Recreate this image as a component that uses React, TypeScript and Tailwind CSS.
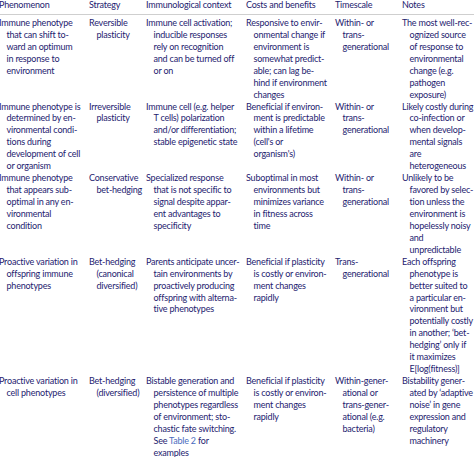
import React from 'react';

type Cell = string[];

interface Row {
  cells: Cell[];
}

const headers = [
  'Phenomenon',
  'Strategy',
  'Immunological context',
  'Costs and benefits',
  'Timescale',
  'Notes',
];

const rows: Row[] = [
  {
    cells: [
      ['Immune phenotype', 'that can shift to-', 'ward an optimum', 'in response to', 'environment'],
      ['Reversible', 'plasticity'],
      ['Immune cell activation;', 'inducible responses', 'rely on recognition', 'and can be turned off', 'or on'],
      [
        'Responsive to envir-',
        'onmental change if',
        'environment is',
        'somewhat predict-',
        'able; can lag be-',
        'hind if environment',
        'changes',
      ],
      ['Within- or', 'trans-', 'generational'],
      ['The most well-rec-', 'ognized source', 'of response to', 'environmental', 'change (e.g.', 'pathogen', 'exposure)'],
    ],
  },
  {
    cells: [
      ['Immune phenotype is', 'determined by en-', 'vironmental condi-', 'tions during', 'development of cell', 'or organism'],
      ['Irreversible', 'plasticity'],
      ['Immune cell (e.g. helper', 'T cells) polarization', 'and/or differentiation;', 'stable epigenetic state'],
      ['Beneficial if environ-', 'ment is predictable', 'within a lifetime', "(cell's or", "organism's)"],
      ['Within- or', 'trans-', 'generational'],
      ['Likely costly during', 'co-infection or', 'when develop-', 'mental signals', 'are', 'heterogeneous'],
    ],
  },
  {
    cells: [
      ['Immune phenotype', 'that appears sub-', 'optimal in any en-', 'vironmental', 'condition'],
      ['Conservative', 'bet-hedging'],
      ['Specialized response', 'that is not specific to', 'signal despite appar-', 'ent advantages to', 'specificity'],
      ['Suboptimal in most', 'environments but', 'minimizes variance', 'in fitness across', 'time'],
      ['Within- or', 'trans-', 'generational'],
      ['Unlikely to be', 'favored by selec-', 'tion unless the', 'environment is', 'hopelessly noisy', 'and', 'unpredictable'],
    ],
  },
  {
    cells: [
      ['Proactive variation in', 'offspring immune', 'phenotypes'],
      ['Bet-hedging', '(canonical', 'diversified)'],
      [
        'Parents anticipate uncer-',
        'tain environments by',
        'proactively producing',
        'offspring with alterna-',
        'tive phenotypes',
      ],
      ['Beneficial if plasticity', 'is costly or environ-', 'ment changes', 'rapidly'],
      ['Trans-', 'generational'],
      [
        'Each offspring',
        'phenotype is',
        'better suited to',
        'a particular en-',
        'vironment but',
        'potentially costly',
        'in another; \u2018bet-',
        'hedging\u2019 only if',
        'it maximizes',
        'E[log(fitness)]',
      ],
    ],
  },
  {
    cells: [
      ['Proactive variation in', 'cell phenotypes'],
      ['Bet-hedging', '(diversified)'],
      [
        'Bistable generation and',
        'persistence of multiple',
        'phenotypes regardless',
        'of environment; sto-',
        'chastic fate switching.',
        '@@TABLE2',
        'examples',
      ],
      ['Beneficial if plasticity', 'is costly or environ-', 'ment changes', 'rapidly'],
      ['Within-gener-', 'ational or', 'trans-gener-', 'ational (e.g.', 'bacteria)'],
      ['Bistability gener-', 'ated by \u2018adaptive', 'noise\u2019 in gene', 'expression and', 'regulatory', 'machinery'],
    ],
  },
];

const grid = 'grid grid-cols-[89px_57px_100px_89px_67px_1fr]';

function Line({ text, first }: { text: string; first: boolean }) {
  const indent = first ? '' : 'pl-[7.5px]';
  if (text === '@@TABLE2') {
    return (
      <div className={`whitespace-nowrap ${indent}`}>
        See <span className="text-[#4a6cc0]">Table 2</span> for
      </div>
    );
  }
  return <div className={`whitespace-nowrap ${indent}`}>{text}</div>;
}

export default function App() {
  return (
    <div
      className="w-[474px] h-[457px] overflow-hidden bg-white text-[#25226f] text-[9px] tracking-[-0.2px] leading-[11.93px]"
      style={{ fontFamily: 'Lato, "Open Sans", sans-serif' }}
    >
      <div className={`${grid} -mt-[1px] pb-[3px] border-b border-[#cfcfcf]`}>
        {headers.map((h, i) => (
          <div key={h} className={`whitespace-nowrap ${i === 0 ? '-ml-[1px]' : ''}`}>
            {h}
          </div>
        ))}
      </div>
      <div className="pt-[2px]">
        {rows.map((row, ri) => (
          <div key={ri} className={grid}>
            {row.cells.map((cell, ci) => (
              <div key={ci} className={ci === 0 ? '-ml-[1px]' : ''}>
                {cell.map((line, li) => (
                  <Line key={li} text={line} first={li === 0} />
                ))}
              </div>
            ))}
          </div>
        ))}
      </div>
    </div>
  );
}
